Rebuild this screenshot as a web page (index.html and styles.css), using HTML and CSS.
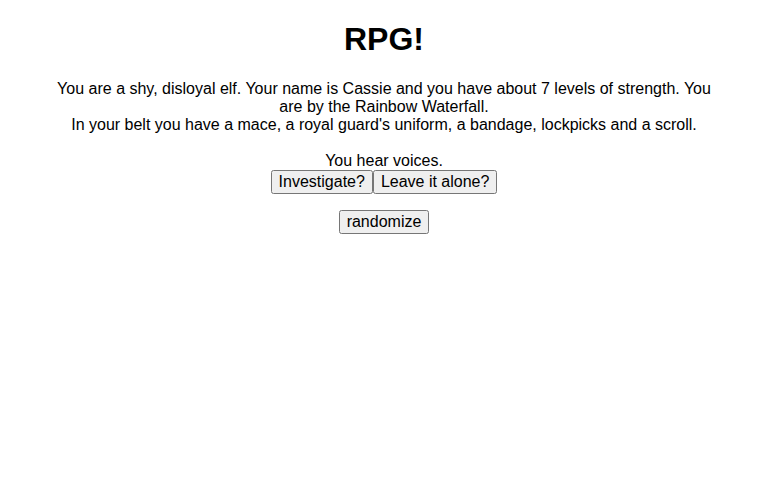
FILE: index.html
```html
<!DOCTYPE html>
<html lang="en">
<head>
    <meta charset="UTF-8">
    <meta name="viewport" content="width=device-width, initial-scale=1.0">
    <title>RPG!</title>
    <link rel="stylesheet" href="styles.css">
</head>
<body>
    <h1>RPG!</h1>
    <div class="story">
        <div id="intro">You are a shy, disloyal elf. Your name is Cassie and you have about 7 levels of strength. You are by the Rainbow Waterfall.</div>
        <div id="inventory">In your belt you have a mace, a royal guard's uniform, a bandage, lockpicks and a scroll.</div>
        <br>
        <div id="event">You hear voices.</div>
        <div id="choices"><button type="button">Investigate?</button><button type="button">Leave it alone?</button></div>
        <p><button type="button" id="randomize">randomize</button></p>
    </div>
</body>
</html>
```

FILE: styles.css
```css
body {
    font-family: 'Liberation Sans', Arial, sans-serif;
    text-align: center;
    color: #000;
    background-color: #fff;
}
h1 {
    font-size: 32px;
    margin: 13px 0 22px;
}
.story {
    max-width: 680px;
    margin: 0 auto;
    font-size: 16px;
}
button {
    font-family: inherit;
    font-size: 16px;
}
```
